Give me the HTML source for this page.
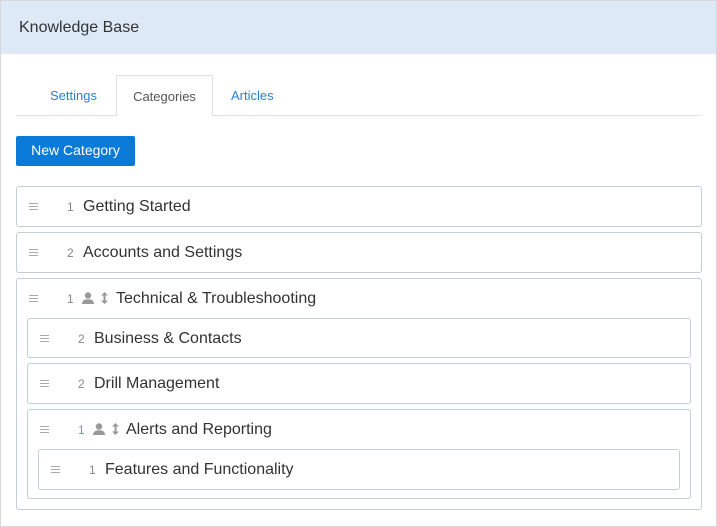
<!DOCTYPE html>
<html><head><style>
*{margin:0;padding:0;box-sizing:border-box}
body{width:717px;height:527px;background:#fff;font-family:"Liberation Sans",sans-serif;position:relative;overflow:hidden}
.frame{position:absolute;left:0;top:0;width:717px;height:527px;border:1px solid #d5d9de}
.hdr{position:absolute;left:1px;top:1px;width:715px;height:53px;background:#dde9f7;font-size:16px;color:#333;padding:18px 0 0 18px}
.tabline{position:absolute;left:16px;top:115px;width:685px;height:1px;background:#dde1e5}
.tab{position:absolute;top:88px;font-size:13px;color:#2a7fd6}
.tabact{position:absolute;left:116px;top:75px;width:97px;height:41px;border:1px solid #dde1e5;border-bottom:none;background:#fff;font-size:13px;color:#555;text-align:center;padding-top:13px}
.btn{position:absolute;left:16px;top:136px;width:119px;height:30px;background:#0a7ad9;border-radius:2px;color:#fff;font-size:14px;text-align:center;line-height:29px}
.box{position:absolute;border:1px solid #c5ccd4;border-radius:3px;background:#fff}
.row{position:absolute;height:40px;line-height:42px;font-size:16px;color:#333}
.n{position:absolute;font-size:12px;color:#888}
.t{position:absolute;white-space:nowrap}
.hs{position:absolute;left:13px;top:17px}
</style></head><body>
<div class="frame"></div>
<div class="hdr">Knowledge Base</div>
<div class="tabline"></div>
<div class="tab" style="left:50px">Settings</div>
<div class="tabact">Categories</div>
<div class="tab" style="left:231px">Articles</div>
<div class="btn">New Category</div>

<svg width="0" height="0" style="position:absolute">
<defs>
<g id="hd"><rect x="0" y="0" width="9" height="1" fill="#aaa"/><rect x="0" y="3" width="9" height="1" fill="#aaa"/><rect x="0" y="6" width="9" height="1" fill="#aaa"/></g>
<g id="us"><circle cx="6" cy="3.5" r="3.2" fill="#999"/><path d="M0 12 Q0 7.2 6 7.2 Q12 7.2 12 12Z" fill="#999"/></g>
<g id="ar"><path d="M3.5 0 L7 3.5 H4.5 V8.5 H7 L3.5 12 L0 8.5 H2.5 V3.5 H0Z" fill="#999"/></g>
</defs></svg>

<div class="box" style="left:16px;top:186px;width:686px;height:41px"></div>
<div class="row" style="left:16px;top:186px"><svg class="hs" width="9" height="7"><use href="#hd"/></svg><span class="n" style="left:51px">1</span><span class="t" style="left:67px">Getting Started</span></div>

<div class="box" style="left:16px;top:232px;width:686px;height:41px"></div>
<div class="row" style="left:16px;top:232px"><svg class="hs" width="9" height="7"><use href="#hd"/></svg><span class="n" style="left:51px">2</span><span class="t" style="left:67px">Accounts and Settings</span></div>

<div class="box" style="left:16px;top:278px;width:686px;height:232px"></div>
<div class="row" style="left:16px;top:278px"><svg class="hs" width="9" height="7"><use href="#hd"/></svg><span class="n" style="left:51px">1</span>
<svg style="position:absolute;left:66px;top:14px" width="12" height="12"><use href="#us"/></svg>
<svg style="position:absolute;left:85px;top:14px" width="7" height="12"><use href="#ar"/></svg>
<span class="t" style="left:100px">Technical &amp; Troubleshooting</span></div>

<div class="box" style="left:27px;top:318px;width:664px;height:40px"></div>
<div class="row" style="left:27px;top:318px"><svg class="hs" width="9" height="7"><use href="#hd"/></svg><span class="n" style="left:51px">2</span><span class="t" style="left:67px">Business &amp; Contacts</span></div>

<div class="box" style="left:27px;top:363px;width:664px;height:41px"></div>
<div class="row" style="left:27px;top:363px"><svg class="hs" width="9" height="7"><use href="#hd"/></svg><span class="n" style="left:51px">2</span><span class="t" style="left:67px">Drill Management</span></div>

<div class="box" style="left:27px;top:409px;width:664px;height:90px"></div>
<div class="row" style="left:27px;top:409px"><svg class="hs" width="9" height="7"><use href="#hd"/></svg><span class="n" style="left:51px;color:#5a9">1</span>
<svg style="position:absolute;left:66px;top:14px" width="12" height="12"><use href="#us"/></svg>
<svg style="position:absolute;left:85px;top:14px" width="7" height="12"><use href="#ar"/></svg>
<span class="t" style="left:99px">Alerts and Reporting</span></div>

<div class="box" style="left:38px;top:449px;width:642px;height:41px"></div>
<div class="row" style="left:38px;top:449px"><svg class="hs" width="9" height="7"><use href="#hd"/></svg><span class="n" style="left:51px">1</span><span class="t" style="left:67px">Features and Functionality</span></div>
</body></html>
